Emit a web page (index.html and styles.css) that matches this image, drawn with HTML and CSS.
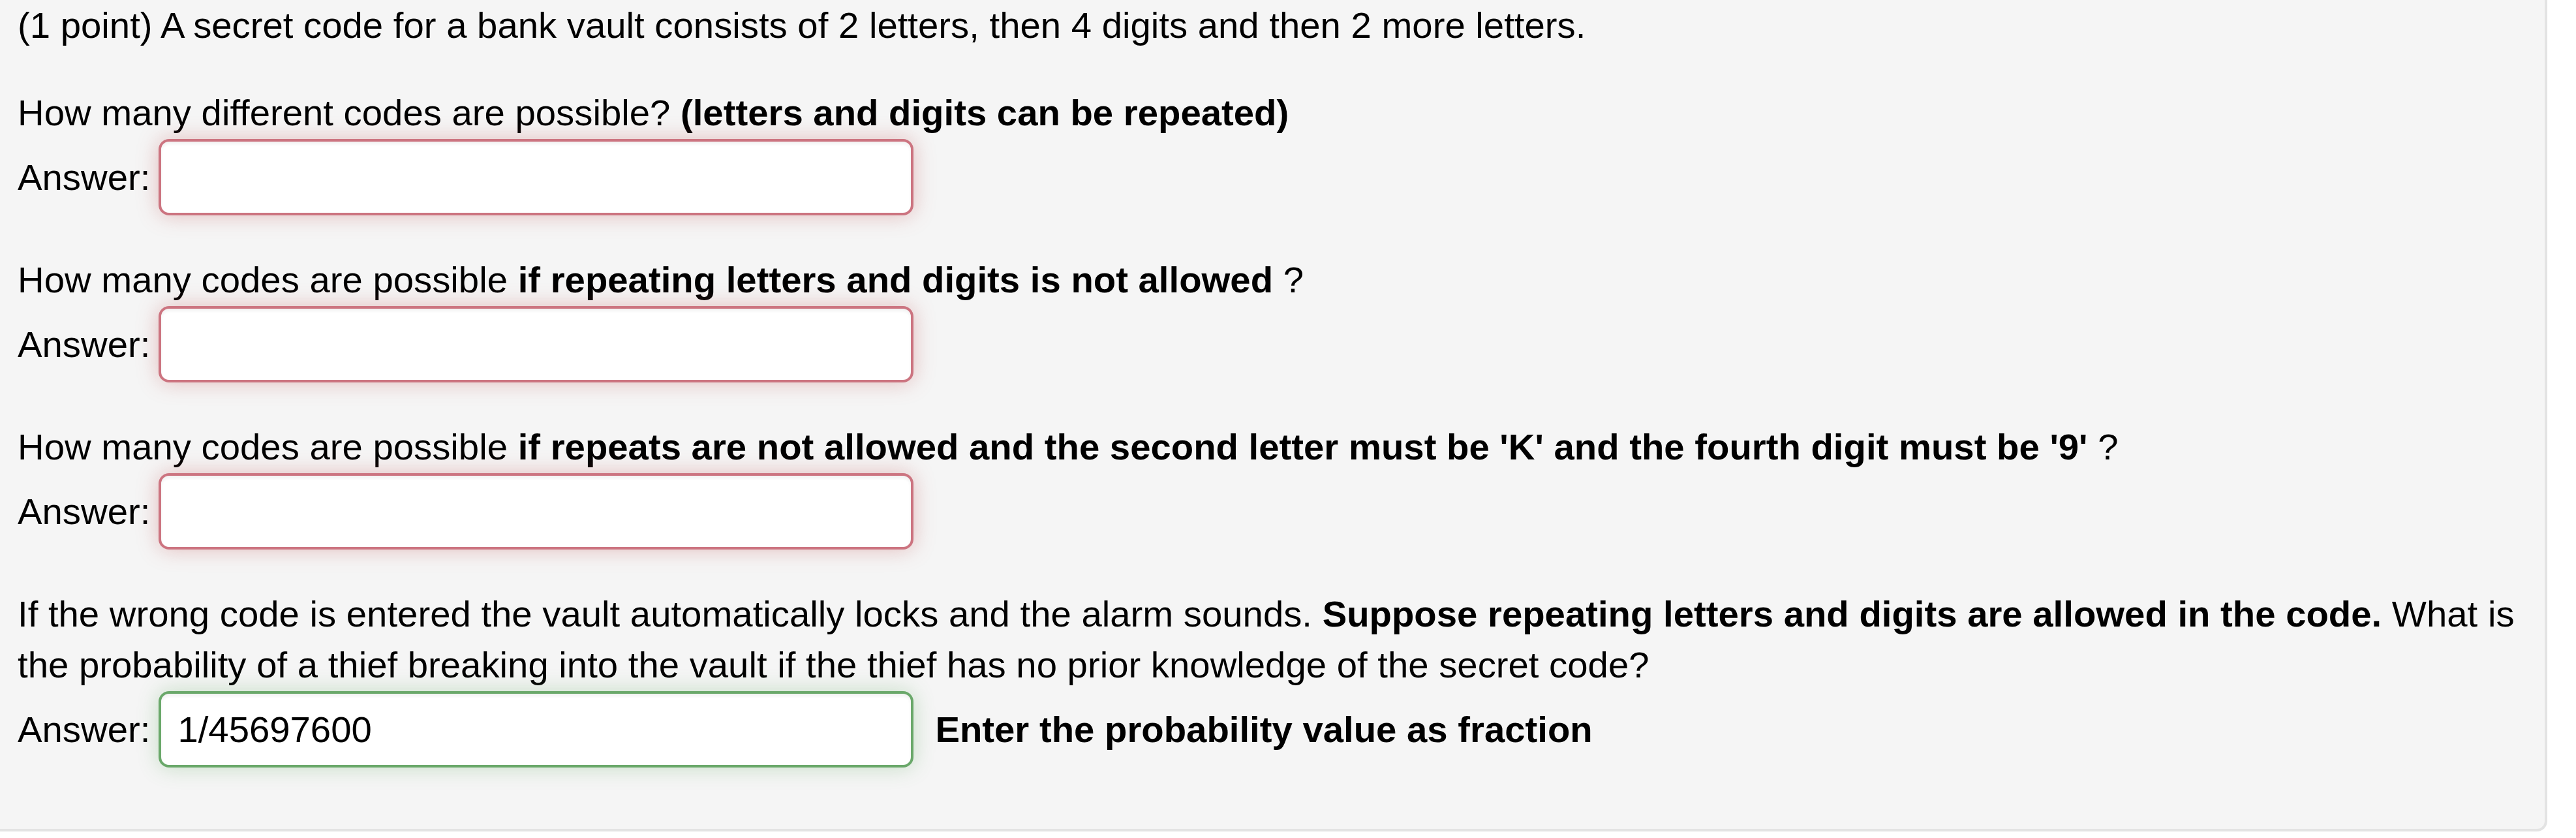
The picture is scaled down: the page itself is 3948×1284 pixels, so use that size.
FILE: index.html
```html
<!DOCTYPE html>
<html lang="en">
<head>
<meta charset="utf-8">
<title>Secret code problem</title>
<link rel="stylesheet" href="styles.css">
</head>
<body>
<div class="well">
  <p class="line intro">(1 point) A secret code for a bank vault consists of 2 letters, then 4 digits and then 2 more letters.</p>

  <div class="question">
    <p class="line">How many different codes are possible? <b>(letters and digits can be repeated)</b></p>
    <div class="answer-row">
      <span class="label">Answer:</span>
      <input class="field incorrect" type="text" aria-label="Answer 1">
    </div>
  </div>

  <div class="question">
    <p class="line">How many codes are possible <b>if repeating letters and digits is not allowed</b> ?</p>
    <div class="answer-row">
      <span class="label">Answer:</span>
      <input class="field incorrect" type="text" aria-label="Answer 2">
    </div>
  </div>

  <div class="question">
    <p class="line">How many codes are possible <b>if repeats are not allowed and the second letter must be 'K' and the fourth digit must be '9'</b> ?</p>
    <div class="answer-row">
      <span class="label">Answer:</span>
      <input class="field incorrect" type="text" aria-label="Answer 3">
    </div>
  </div>

  <div class="question">
    <p class="line">If the wrong code is entered the vault automatically locks and the alarm sounds. <b>Suppose repeating letters and digits are allowed in the code.</b> What is the probability of a thief breaking into the vault if the thief has no prior knowledge of the secret code?</p>
    <div class="answer-row">
      <span class="label">Answer:</span>
      <input class="field correct" type="text" value="1/45697600" aria-label="Answer 4">
      <b class="hint">Enter the probability value as fraction</b>
    </div>
  </div>
</div>
</body>
</html>
```

FILE: styles.css
```css
html, body {
  margin: 0;
  padding: 0;
  background: #ffffff;
}

body {
  font-family: "Liberation Sans", Arial, Helvetica, sans-serif;
  color: #000000;
}

.well {
  box-sizing: border-box;
  width: 3904px;
  background: #f5f5f5;
  border-right: 4px solid #e3e3e3;
  border-bottom: 4px solid #e3e3e3;
  border-bottom-right-radius: 16px;
  padding: 0 22px 94px 27px;
  font-size: 56.3px;
  line-height: 78px;
}

.line {
  margin: 0;
}

.intro {
  margin-bottom: 56px;
}

.question + .question {
  margin-top: 60px;
}

.answer-row {
  display: flex;
  align-items: baseline;
  padding-top: 1px;
}

.label {
  margin-right: 13px;
}

.field {
  box-sizing: border-box;
  width: 1157px;
  height: 117px;
  margin: 0;
  padding: 0 25px;
  font: inherit;
  line-height: normal;
  color: #000000;
  background: #ffffff;
  border: 4px solid #cccccc;
  border-radius: 16px;
  outline: none;
}

.incorrect {
  border-color: #cc7480;
  box-shadow: inset 0 4px 4px rgba(0, 0, 0, 0.05), 0 0 32px rgba(191, 84, 84, 0.35);
}

.correct {
  border-color: #6aa86a;
  box-shadow: inset 0 4px 4px rgba(0, 0, 0, 0.05), 0 0 32px rgba(85, 164, 85, 0.3);
}

.hint {
  margin-left: 33px;
}
```
